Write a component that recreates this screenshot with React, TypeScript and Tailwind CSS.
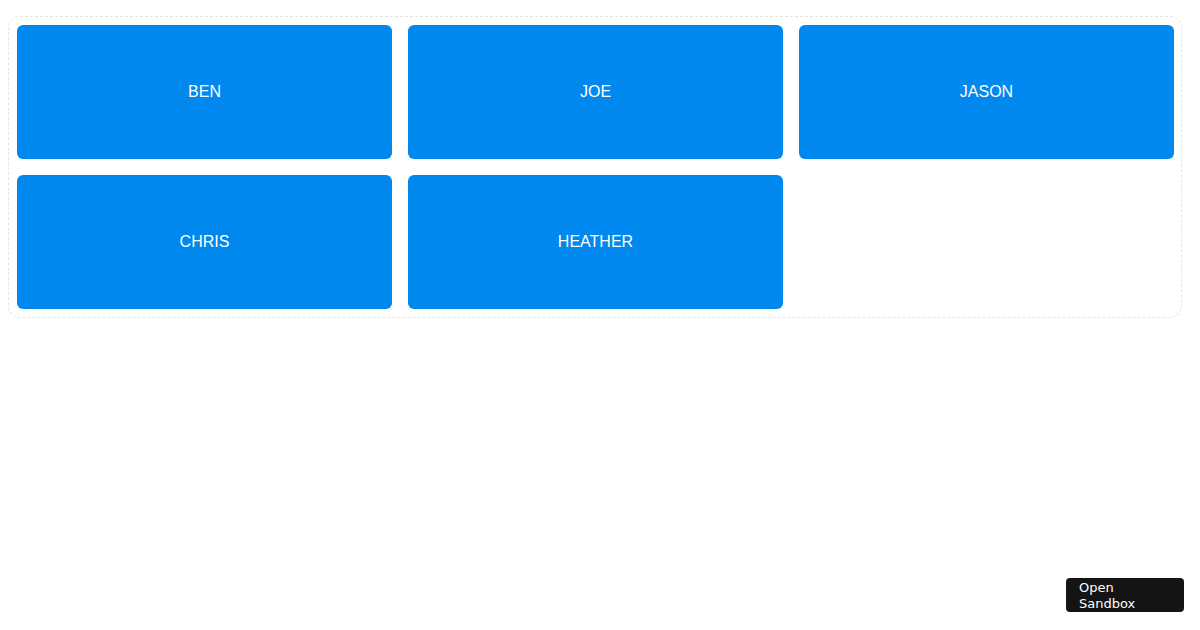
import React from 'react';

const names = ['BEN', 'JOE', 'JASON', 'CHRIS', 'HEATHER'];

export default function App() {
  return (
    <div className="relative w-[1200px] h-[630px] bg-white overflow-hidden">
      <div className="w-[1174px] ml-2 mt-4 pl-2 pr-[7px] py-2 border border-dashed border-[#e3e3e3] rounded-xl">
        <div className="grid grid-cols-3 gap-4">
          {names.map((name) => (
            <div
              key={name}
              className="h-[134px] rounded-md bg-[#0088ee] flex items-center justify-center text-white text-base"
              style={{ fontFamily: '"Liberation Sans", Arial, sans-serif' }}
            >
              {name}
            </div>
          ))}
        </div>
      </div>

      <div
        className="absolute right-4 bottom-[18px] w-[118px] h-[34px] rounded bg-[#141414] text-white text-[13px] leading-[16px] pl-[13px] pt-[2px]"
        style={{ fontFamily: '"DejaVu Sans", Verdana, sans-serif' }}
      >
        <div>Open</div>
        <div>Sandbox</div>
      </div>
    </div>
  );
}
